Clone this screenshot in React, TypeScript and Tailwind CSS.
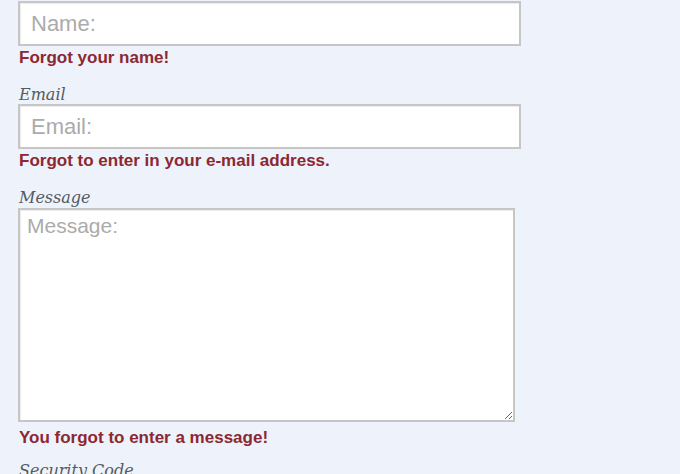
import React from "react"

const errorCls =
  "mt-[2px] h-[20px] pl-[1px] text-[17px] leading-[20px] font-bold text-[#8c2832] font-['Liberation_Sans',Arial,sans-serif]"
const labelCls =
  "h-[18px] text-[16px] leading-[18px] italic text-[#555b63] font-['DejaVu_Serif',serif]"
const fieldCls =
  "block bg-white border-2 border-[#c6c6c6] shadow-[inset_1px_1px_1px_rgba(0,0,0,0.08)] outline-none text-[#444] placeholder:text-[#ababab] font-['Liberation_Sans',Arial,sans-serif]"

export default function App() {
  return (
    <div className="w-[680px] h-[474px] overflow-hidden bg-[#eef2fa] pl-[18px] pt-[1px]">
      <form className="flex flex-col">
        <input
          className={`${fieldCls} w-[503px] h-[45px] px-[11px] text-[22px]`}
          placeholder="Name:"
        />
        <p className={errorCls}>Forgot your name!</p>

        <label className={`${labelCls} mt-[18px] pl-[1px]`}>Email</label>
        <input
          className={`${fieldCls} w-[503px] h-[45px] px-[11px] text-[22px]`}
          placeholder="Email:"
        />
        <p className={errorCls}>Forgot to enter in your e-mail address.</p>

        <label className={`${labelCls} mt-[18px] pl-[1px]`}>Message</label>
        <textarea
          className={`${fieldCls} mt-[1px] w-[497px] h-[214px] px-[7px] py-[3px] text-[21px] leading-[26px]`}
          placeholder="Message:"
        />
        <p className={`${errorCls} mt-[6px]`}>You forgot to enter a message!</p>

        <label className={`${labelCls} mt-[14px] pl-[1px]`}>Security Code</label>
      </form>
    </div>
  )
}
